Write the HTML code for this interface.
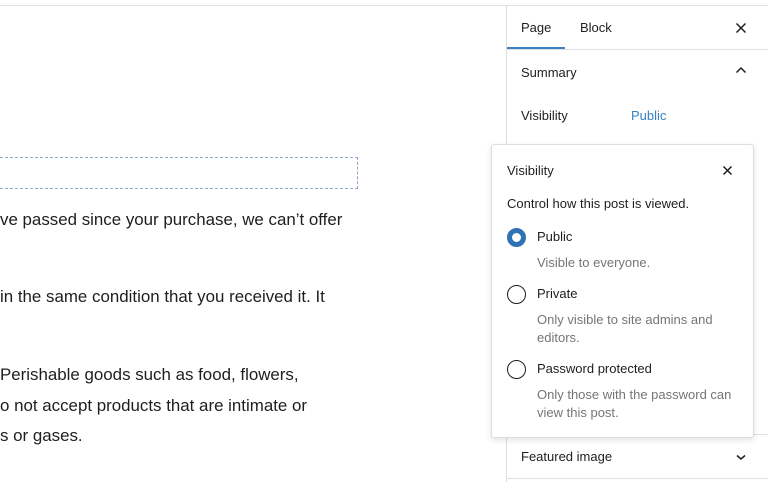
<!DOCTYPE html>
<html><head><style>
*{margin:0;padding:0;box-sizing:border-box}
body{width:768px;height:482px;background:#fff;position:relative;overflow:hidden;font-family:"Liberation Sans",sans-serif;color:#1e1e1e}
.a{position:absolute;white-space:nowrap}
.t{font-size:16.9px;left:0}
.s{font-size:13px}
.g{color:#757575}
.r{position:absolute;width:19px;height:19px;border-radius:50%;border:1.5px solid #1e1e1e;left:507px}
</style></head><body>
<div class="a" style="left:0;top:5px;width:768px;height:1px;background:#e0e0e0"></div>
<div class="a" style="left:0;top:157px;width:358px;height:32px;border:1px dashed #8fa8c8;border-left:none"></div>
<div class="a t" style="top:210px">ve passed since your purchase, we can’t offer</div>
<div class="a t" style="top:287px">in the same condition that you received it. It</div>
<div class="a t" style="top:365px">Perishable goods such as food, flowers,</div>
<div class="a t" style="top:396px">o not accept products that are intimate or</div>
<div class="a t" style="top:426px">s or gases.</div>

<div class="a" style="left:506px;top:5px;width:1px;height:477px;background:#e0e0e0"></div>
<div class="a" style="left:507px;top:49px;width:261px;height:1px;background:#e0e0e0"></div>
<div class="a" style="left:507px;top:47px;width:58px;height:2px;background:#3582c4"></div>
<div class="a s" style="left:521px;top:20px;font-weight:500">Page</div>
<div class="a s" style="left:580px;top:20px">Block</div>
<svg class="a" style="left:734px;top:21px" width="14" height="14" viewBox="0 0 14 14"><path d="M2.5 2.5L11.5 11.5M11.5 2.5L2.5 11.5" stroke="#1e1e1e" stroke-width="1.5"/></svg>
<div class="a s" style="left:521px;top:65px">Summary</div>
<svg class="a" style="left:735px;top:66px" width="12" height="8" viewBox="0 0 12 8"><path d="M1.5 6.5L6 2L10.5 6.5" stroke="#1e1e1e" stroke-width="1.5" fill="none"/></svg>
<div class="a s" style="left:521px;top:108px">Visibility</div>
<div class="a s" style="left:631px;top:108px;color:#3582c4">Public</div>

<div class="a" style="left:507px;top:434px;width:261px;height:1px;background:#e0e0e0"></div>
<div class="a s" style="left:521px;top:449px">Featured image</div>
<svg class="a" style="left:735px;top:453px" width="12" height="8" viewBox="0 0 12 8"><path d="M2 2.5L6 6L10 2.5" stroke="#1e1e1e" stroke-width="1.5" fill="none"/></svg>
<div class="a" style="left:507px;top:478px;width:261px;height:1px;background:#e0e0e0"></div>

<div class="a" style="left:491px;top:144px;width:263px;height:294px;background:#fff;border:1px solid #ddd;border-radius:3px;box-shadow:0 2px 6px rgba(0,0,0,.12)"></div>
<div class="a s" style="left:507px;top:163px;font-weight:500">Visibility</div>
<svg class="a" style="left:721px;top:164px" width="13" height="13" viewBox="0 0 13 13"><path d="M2.5 2.5L10.5 10.5M10.5 2.5L2.5 10.5" stroke="#1e1e1e" stroke-width="1.5"/></svg>
<div class="a s" style="left:507px;top:196px">Control how this post is viewed.</div>
<div class="r" style="top:228px;border:5.5px solid #2f73b5;background:#fff"></div>
<div class="a s" style="left:537px;top:229px">Public</div>
<div class="a s g" style="left:537px;top:255px">Visible to everyone.</div>
<div class="r" style="top:285px"></div>
<div class="a s" style="left:537px;top:286px">Private</div>
<div class="a s g" style="left:537px;top:312px">Only visible to site admins and</div>
<div class="a s g" style="left:537px;top:330px">editors.</div>
<div class="r" style="top:360px"></div>
<div class="a s" style="left:537px;top:361px">Password protected</div>
<div class="a s g" style="left:537px;top:387px">Only those with the password can</div>
<div class="a s g" style="left:537px;top:405px">view this post.</div>
</body></html>
